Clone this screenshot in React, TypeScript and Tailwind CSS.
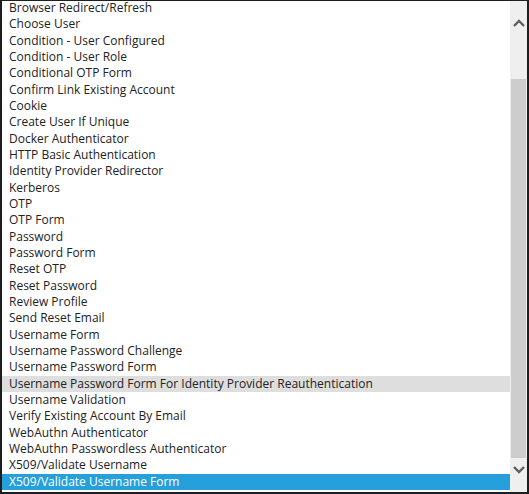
import React from "react";

const items = [
  "Browser Redirect/Refresh",
  "Choose User",
  "Condition - User Configured",
  "Condition - User Role",
  "Conditional OTP Form",
  "Confirm Link Existing Account",
  "Cookie",
  "Create User If Unique",
  "Docker Authenticator",
  "HTTP Basic Authentication",
  "Identity Provider Redirector",
  "Kerberos",
  "OTP",
  "OTP Form",
  "Password",
  "Password Form",
  "Reset OTP",
  "Reset Password",
  "Review Profile",
  "Send Reset Email",
  "Username Form",
  "Username Password Challenge",
  "Username Password Form",
  "Username Password Form For Identity Provider Reauthentication",
  "Username Validation",
  "Verify Existing Account By Email",
  "WebAuthn Authenticator",
  "WebAuthn Passwordless Authenticator",
  "X509/Validate Username",
  "X509/Validate Username Form",
];

export default function App() {
  return (
    <div className="w-[529px] h-[494px] bg-[#1e1e1e] pl-[2px] pt-[1px] pr-[2px] pb-[2px]">
      <div className="flex h-full w-full bg-white overflow-hidden">
        <div className="flex-1 overflow-hidden">
          <div className="mt-[-1px] flex flex-col" style={{ fontFamily: '"Open Sans", sans-serif' }}>
            {items.map((it, i) => {
              const hover = i === 23;
              const sel = i === 29;
              return (
                <div
                  key={it}
                  className={
                    "pl-[7px] pr-[6px] text-[12px] leading-[16.34px] h-[16.34px] whitespace-nowrap " +
                    (sel
                      ? "bg-[#26a0da] text-white"
                      : hover
                      ? "bg-[#dedede] text-[#222222]"
                      : "text-[#222222]")
                  }
                >
                  {it}
                </div>
              );
            })}
          </div>
        </div>
        <div className="w-[17px] bg-[#efefef] flex flex-col items-center">
          <svg className="mt-[18px]" width="12" height="8" viewBox="0 0 12 8">
            <path d="M1 7 L6 2 L11 7" fill="none" stroke="#5f5f5f" strokeWidth="2.4" />
          </svg>
          <div className="mt-[52px] h-[379px] w-[15px] bg-[#cdcdcd]" />
          <svg className="mt-[8px]" width="12" height="8" viewBox="0 0 12 8">
            <path d="M1 1 L6 6 L11 1" fill="none" stroke="#5f5f5f" strokeWidth="2.4" />
          </svg>
        </div>
      </div>
    </div>
  );
}
